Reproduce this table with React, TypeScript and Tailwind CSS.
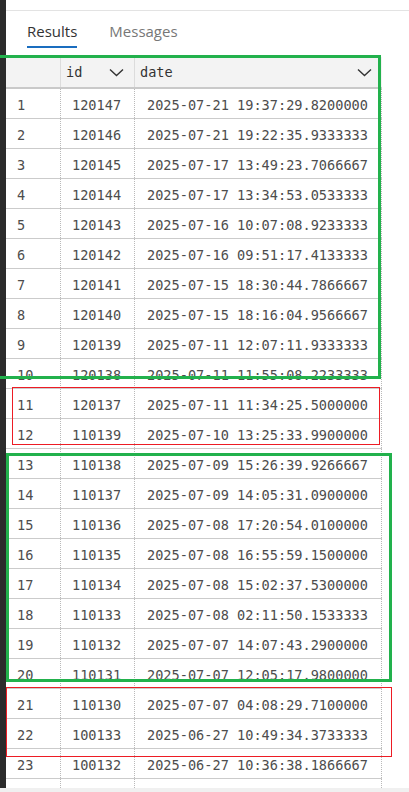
import React from "react";

const ROWS: [string, string][] = [
  ["120147", "2025-07-21 19:37:29.8200000"],
  ["120146", "2025-07-21 19:22:35.9333333"],
  ["120145", "2025-07-17 13:49:23.7066667"],
  ["120144", "2025-07-17 13:34:53.0533333"],
  ["120143", "2025-07-16 10:07:08.9233333"],
  ["120142", "2025-07-16 09:51:17.4133333"],
  ["120141", "2025-07-15 18:30:44.7866667"],
  ["120140", "2025-07-15 18:16:04.9566667"],
  ["120139", "2025-07-11 12:07:11.9333333"],
  ["120138", "2025-07-11 11:55:08.2233333"],
  ["120137", "2025-07-11 11:34:25.5000000"],
  ["110139", "2025-07-10 13:25:33.9900000"],
  ["110138", "2025-07-09 15:26:39.9266667"],
  ["110137", "2025-07-09 14:05:31.0900000"],
  ["110136", "2025-07-08 17:20:54.0100000"],
  ["110135", "2025-07-08 16:55:59.1500000"],
  ["110134", "2025-07-08 15:02:37.5300000"],
  ["110133", "2025-07-08 02:11:50.1533333"],
  ["110132", "2025-07-07 14:07:43.2900000"],
  ["110131", "2025-07-07 12:05:17.9800000"],
  ["110130", "2025-07-07 04:08:29.7100000"],
  ["100133", "2025-06-27 10:49:34.3733333"],
  ["100132", "2025-06-27 10:36:38.1866667"],
  ["", ""],
];

function Chevron() {
  return (
    <svg width="15" height="9" viewBox="0 0 15 9" fill="none" stroke="#333" strokeWidth="1.4">
      <polyline points="1,1.5 7.5,7.5 14,1.5" />
    </svg>
  );
}

export default function App() {
  return (
    <div
      className="relative w-[409px] h-[792px] overflow-hidden bg-white flex flex-col"
      style={{ fontFamily: "'DejaVu Sans Mono', monospace" }}
    >
      <div className="flex flex-1 min-h-0">
        {/* dark strip on the left */}
        <div className="w-[6px] shrink-0 bg-[#2b2b2b]" />

        <div className="flex-1 flex flex-col overflow-hidden">
          <div className="h-[11px] shrink-0 border-b border-[#e3e3e3]" />

          {/* tabs */}
          <div className="flex shrink-0 gap-[32px] pl-[21px] pt-[11px] mb-[9px] font-['Open_Sans',sans-serif] text-[15px]">
            <div className="flex flex-col">
              <span className="leading-[18px] text-[#333]">Results</span>
              <div className="h-[2px] mt-[6px] bg-[#1a6dbf]" />
            </div>
            <span className="leading-[18px] text-[#777]">Messages</span>
          </div>

          {/* grid header */}
          <div className="flex shrink-0 w-[376px] h-[32px] bg-[#f3f3f3] border-b-2 border-[#c9c9c9] text-[13.6px] text-[#333]">
            <div className="w-[55px] border-r border-[#dcdcdc]" />
            <div className="w-[74px] border-r border-[#dcdcdc] flex items-center justify-between pl-[5px] pr-[10px]">
              <span>id</span>
              <Chevron />
            </div>
            <div className="w-[247px] flex items-center justify-between pl-[5px] pr-[10px]">
              <span>date</span>
              <Chevron />
            </div>
          </div>

          {/* grid body */}
          <div className="flex flex-col shrink-0 text-[13.6px] text-[#4d4d4d]">
            {ROWS.map(([id, date], i) => (
              <div key={i} className="flex w-[376px] h-[30px] shrink-0 border-b border-[#cbcbcb]">
                <div className="w-[55px] border-r border-dotted border-[#b9b9b9] flex items-center pl-[11px] pt-[3px]">
                  {id ? i + 1 : ""}
                </div>
                <div className="w-[74px] border-r border-dotted border-[#b9b9b9] flex items-center pl-[11px] pt-[3px]">
                  {id}
                </div>
                <div className="w-[247px] border-r border-dotted border-[#b9b9b9] flex items-center pl-[12px] pt-[3px]">
                  {date}
                </div>
              </div>
            ))}
          </div>
        </div>
      </div>
      <div className="h-[4px] shrink-0 bg-[#f0f0f0]" />

      {/* annotation boxes drawn over the grid */}
      <div className="absolute left-[-4px] top-[55px] w-[385px] h-[324px] border-[3px] border-[#22b14c]" />
      <div className="absolute left-[12px] top-[387px] w-[368px] h-[58px] border border-[#ed1c24]" />
      <div className="absolute left-[6px] top-[453px] w-[386px] h-[229px] border-[3px] border-[#22b14c]" />
      <div className="absolute left-[6px] top-[687px] w-[386px] h-[70px] border border-[#ed1c24]" />
    </div>
  );
}
